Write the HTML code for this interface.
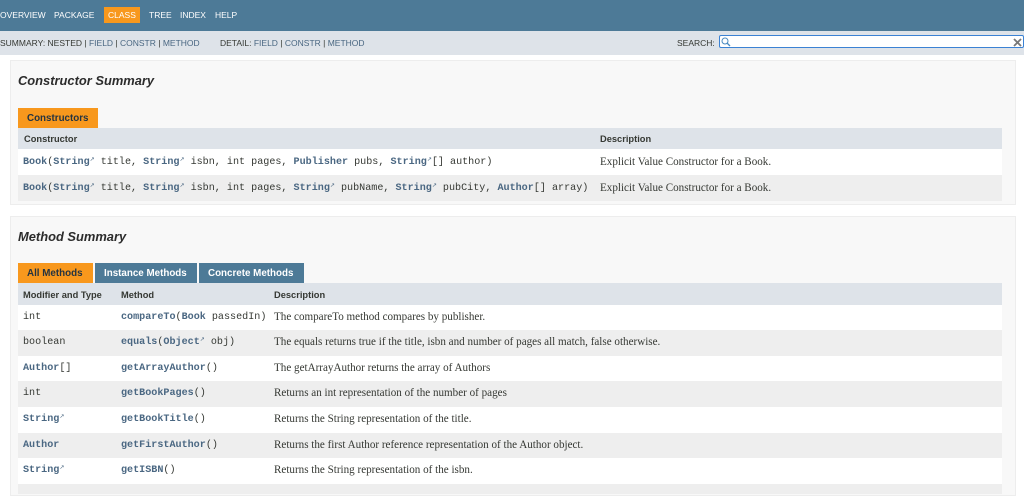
<!DOCTYPE html><html><head><style>
*{margin:0;padding:0;box-sizing:border-box}
body{width:1024px;height:488px;overflow:hidden;background:#fff;font-family:"Liberation Sans",sans-serif;position:relative}
.abs{position:absolute}
.top{left:0;top:0;width:1024px;height:31px;background:#4d7a97}
.top span{position:absolute;top:10px;font-size:8.5px;color:#fff}
.sub{left:0;top:31px;width:1024px;height:24px;background:#dee3e9;font-size:8.5px;color:#353833}
.sub span{position:absolute;top:7px}
.lk{color:#4a6782}
.box{background:#f8f8f8;border:1px solid #ededed}
h3{position:absolute;font-size:12.9px;font-style:italic;font-weight:bold;color:#2c2c2c}
.tab{position:absolute;height:20px;font-size:9.8px;font-weight:bold;line-height:21px;padding:0 9px}
.or{background:#f8981d;color:#253441}
.bl{background:#4d7a97;color:#fff}
.row{position:absolute;left:18px;width:984px}
.hd{background:#dee3e9;font-size:9.3px;font-weight:bold;color:#353833}
.row>span{position:absolute;white-space:pre}
.m{font-family:"Liberation Mono",monospace;font-size:10.1px;color:#353833}
.m b{color:#4a6782}
.s{font-family:"Liberation Serif",serif;font-size:11.1px;color:#353833}
sup{font-size:6px;color:#4a6782;font-weight:normal;vertical-align:3px;line-height:0}
</style></head><body>
<div class="abs top">
<span style="left:0">OVERVIEW</span><span style="left:54px">PACKAGE</span>
<div class="abs" style="left:104px;top:7px;width:36px;height:16px;background:#f8981d"></div>
<span style="left:108px">CLASS</span><span style="left:149px">TREE</span><span style="left:180px">INDEX</span><span style="left:215px">HELP</span>
</div>
<div class="abs sub">
<span style="left:0">SUMMARY: NESTED | <a class="lk">FIELD</a> | <a class="lk">CONSTR</a> | <a class="lk">METHOD</a></span>
<span style="left:220px">DETAIL: <a class="lk">FIELD</a> | <a class="lk">CONSTR</a> | <a class="lk">METHOD</a></span>
<span style="left:677px">SEARCH:</span>
<div class="abs" style="left:719px;top:4px;width:305px;height:13px;background:#fff;border:1px solid #3b82d4;border-radius:2px"></div>
<svg class="abs" style="left:721px;top:6px" width="10" height="10"><circle cx="4" cy="4" r="3" fill="none" stroke="#4a8ac0" stroke-width="1"/><line x1="6" y1="6" x2="9" y2="9" stroke="#4a8ac0" stroke-width="1.3"/></svg>
<svg class="abs" style="left:1013px;top:7px" width="9" height="9"><path d="M1 1L8 8M8 1L1 8" stroke="#777" stroke-width="1.8"/></svg>
</div>

<div class="abs box" style="left:10px;top:60px;width:1006px;height:145px"></div>
<h3 style="left:18px;top:73px">Constructor Summary</h3>
<div class="tab or" style="left:18px;top:108px">Constructors</div>
<div class="row hd" style="top:128px;height:21px"><span style="left:6px;top:6px">Constructor</span><span style="left:582px;top:6px">Description</span></div>
<div class="row" style="top:149px;height:26px;background:#fff"><span class="m" style="left:5px;top:8px"><b>Book</b>(<b>String</b><sup>↗</sup> title, <b>String</b><sup>↗</sup> isbn, int pages, <b>Publisher</b> pubs, <b>String</b><sup>↗</sup>[] author)</span><span class="s" style="left:582px;top:7px">Explicit Value Constructor for a Book.</span></div>
<div class="row" style="top:175px;height:26px;background:#eee"><span class="m" style="left:5px;top:8px"><b>Book</b>(<b>String</b><sup>↗</sup> title, <b>String</b><sup>↗</sup> isbn, int pages, <b>String</b><sup>↗</sup> pubName, <b>String</b><sup>↗</sup> pubCity, <b>Author</b>[] array)</span><span class="s" style="left:582px;top:7px">Explicit Value Constructor for a Book.</span></div>

<div class="abs box" style="left:10px;top:216px;width:1006px;height:280px"></div>
<h3 style="left:18px;top:229px">Method Summary</h3>
<div class="tab or" style="left:18px;top:263px;width:75px">All Methods</div>
<div class="tab bl" style="left:95px;top:263px;width:102px">Instance Methods</div>
<div class="tab bl" style="left:199px;top:263px;width:105px">Concrete Methods</div>
<div class="row hd" style="top:283px;height:22px"><span style="left:5px;top:7px">Modifier and Type</span><span style="left:103px;top:7px">Method</span><span style="left:256px;top:7px">Description</span></div>
<div class="row" style="top:305px;height:25px;background:#fff"><span class="m" style="left:5px;top:7px">int</span><span class="m" style="left:103px;top:7px"><b>compareTo</b>(<b>Book</b> passedIn)</span><span class="s" style="left:256px;top:6px">The compareTo method compares by publisher.</span></div>
<div class="row" style="top:330px;height:26px;background:#eee"><span class="m" style="left:5px;top:7px">boolean</span><span class="m" style="left:103px;top:7px"><b>equals</b>(<b>Object</b><sup>↗</sup> obj)</span><span class="s" style="left:256px;top:6px">The equals returns true if the title, isbn and number of pages all match, false otherwise.</span></div>
<div class="row" style="top:356px;height:25px;background:#fff"><span class="m" style="left:5px;top:7px"><b>Author</b>[]</span><span class="m" style="left:103px;top:7px"><b>getArrayAuthor</b>()</span><span class="s" style="left:256px;top:6px">The getArrayAuthor returns the array of Authors</span></div>
<div class="row" style="top:381px;height:26px;background:#eee"><span class="m" style="left:5px;top:7px">int</span><span class="m" style="left:103px;top:7px"><b>getBookPages</b>()</span><span class="s" style="left:256px;top:6px">Returns an int representation of the number of pages</span></div>
<div class="row" style="top:407px;height:26px;background:#fff"><span class="m" style="left:5px;top:7px"><b>String</b><sup>↗</sup></span><span class="m" style="left:103px;top:7px"><b>getBookTitle</b>()</span><span class="s" style="left:256px;top:6px">Returns the String representation of the title.</span></div>
<div class="row" style="top:433px;height:25px;background:#eee"><span class="m" style="left:5px;top:7px"><b>Author</b></span><span class="m" style="left:103px;top:7px"><b>getFirstAuthor</b>()</span><span class="s" style="left:256px;top:6px">Returns the first Author reference representation of the Author object.</span></div>
<div class="row" style="top:458px;height:26px;background:#fff"><span class="m" style="left:5px;top:7px"><b>String</b><sup>↗</sup></span><span class="m" style="left:103px;top:7px"><b>getISBN</b>()</span><span class="s" style="left:256px;top:6px">Returns the String representation of the isbn.</span></div>
<div class="row" style="top:484px;height:10px;background:#eee"></div>
</body></html>
